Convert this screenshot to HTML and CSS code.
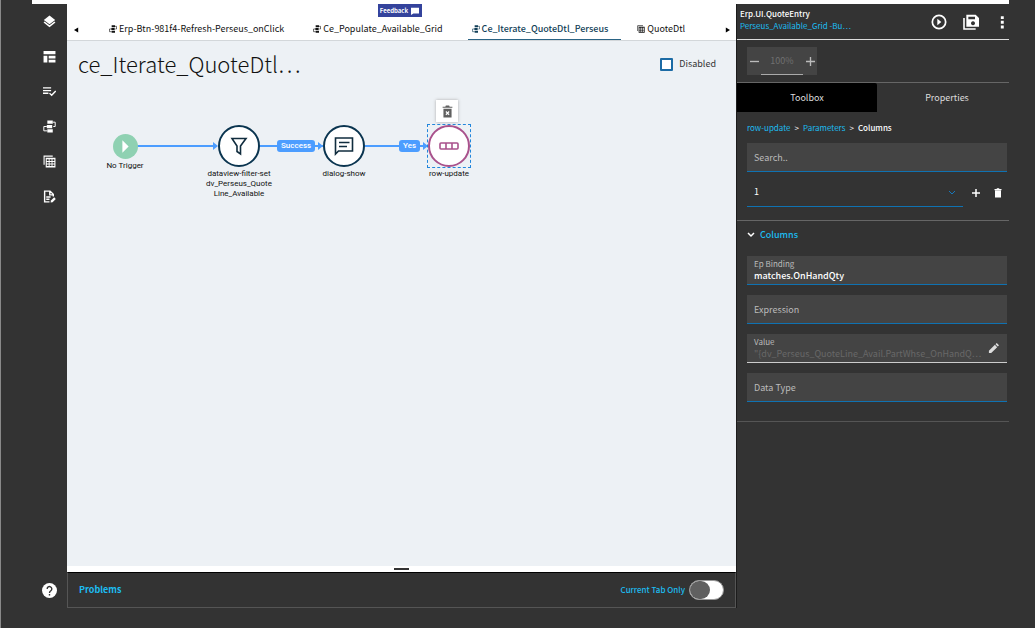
FILE: index.html
```html
<!DOCTYPE html>
<html lang="en">
<head>
    <meta charset="UTF-8">
    <meta name="viewport" content="width=device-width, initial-scale=1.0">
    <title>Application Studio</title>
    <link rel="stylesheet" href="styles.css">
</head>
<body>
    <!-- shared icons -->
    <svg class="sprite" aria-hidden="true">
        <symbol id="icon-event" viewBox="0 0 24 24">
            <path d="M8 1h10v6H8zM7 9h10v6H7zM8 17h10v6H8z" fill="currentColor"/>
            <path d="M18 4h4.500v8H19M7 12H1.500v8H8" fill="none" stroke="currentColor" stroke-width="1.800"/>
        </symbol>
        <symbol id="icon-grid" viewBox="0 0 24 24">
            <path d="M2 18V2h16" fill="none" stroke="currentColor" stroke-width="2"/>
            <path fill-rule="evenodd" fill="currentColor" d="M5 5h18v18H5zM7 8v3h3.500V8zM12.200 8v3h3.600V8zM17.500 8v3H21V8zM7 12.700v3h3.500v-3zM12.200 12.700v3h3.600v-3zM17.500 12.700v3H21v-3zM7 17.500v3h3.500v-3zM12.200 17.500v3h3.600v-3zM17.500 17.500v3H21v-3z"/>
        </symbol>
    </svg>

    <div class="app">
        <nav class="sidebar">
            <button type="button" class="side-btn" aria-label="Layers">
                <svg viewBox="0 0 24 24"><path fill="currentColor" d="M12 19 3 12.200 1 13.800 12 22.500l11-8.700-2-1.600zM12 17l10.500-8L12 1 1.500 9z"/></svg>
            </button>
            <button type="button" class="side-btn" aria-label="Layout">
                <svg viewBox="0 0 24 24"><path fill="currentColor" d="M1 2h22v6H1zM1 10.500h7V23H1zM10.500 10.500H23v5H10.500zM10.500 18H23v5H10.500z"/></svg>
            </button>
            <button type="button" class="side-btn" aria-label="Rules">
                <svg viewBox="0 0 24 24"><path fill="currentColor" d="M0 4h15v2.600H0zM0 9h15v2.600H0zM0 14h10v2.600H0z"/><path d="m12 15 4 4 7.500-8" fill="none" stroke="currentColor" stroke-width="2.600"/></svg>
            </button>
            <button type="button" class="side-btn" aria-label="Events">
                <svg><use href="#icon-event"/></svg>
            </button>
            <button type="button" class="side-btn" aria-label="Data views">
                <svg><use href="#icon-grid"/></svg>
            </button>
            <button type="button" class="side-btn" aria-label="Scripts">
                <svg viewBox="0 0 24 24"><path d="M12 22H3V2h10l6 6v4M12.500 3v6H19M6 13h8M6 17h6" fill="none" stroke="currentColor" stroke-width="2.600"/><path d="m14 23 .6-3.500 6-6 3 3-6 6z" fill="currentColor"/></svg>
            </button>
            <button type="button" class="side-btn side-help" aria-label="Help">
                <svg viewBox="0 0 24 24"><circle cx="12" cy="12" r="12" fill="currentColor"/><path d="M8.300 9.500a3.700 3.700 0 1 1 6 2.800c-1.500 1.200-2.300 1.700-2.300 3.700M12 17.600V20" fill="none" stroke="#333" stroke-width="2.200"/></svg>
            </button>
        </nav>

        <main class="main">
            <div class="tabs">
                <button type="button" class="tab-scroll" aria-label="Previous tabs"><svg viewBox="0 0 6 6"><path d="M5 0v6L0 3z"/></svg></button>
                <div class="tab-list">
                    <button type="button" class="tab"><svg><use href="#icon-event"/></svg>Erp-Btn-981f4-Refresh-Perseus_onClick</button>
                    <button type="button" class="tab"><svg><use href="#icon-event"/></svg>Ce_Populate_Available_Grid</button>
                    <button type="button" class="tab active"><svg><use href="#icon-event"/></svg>Ce_Iterate_QuoteDtl_Perseus</button>
                    <button type="button" class="tab"><svg><use href="#icon-grid"/></svg>QuoteDtl</button>
                </div>
                <button type="button" class="tab-scroll" aria-label="Next tabs"><svg viewBox="0 0 6 6"><path d="M1 0v6l5-3z"/></svg></button>
            </div>

            <section class="workspace">
                <header class="workspace-head">
                    <h1>ce_Iterate_QuoteDtl…</h1>
                    <label class="disabled-check"><input type="checkbox" id="disabled">Disabled</label>
                </header>

                <div class="diagram">
                    <svg class="links" aria-hidden="true">
                        <path d="M70 55h80M192 55h64M298 55h62" fill="none" stroke="#4c9dff" stroke-width="2"/>
                        <path d="M146 51l5 4-5 4zM251 51l5 4-5 4zM356 51l5 4-5 4z" fill="#4c9dff"/>
                    </svg>
                    <div class="node node-start">
                        <svg viewBox="0 0 24 24"><circle cx="12" cy="12" r="12" fill="#8fd1b2"/><path d="M9 6v12l6-6z" fill="#fff"/></svg>
                        <span>No Trigger</span>
                    </div>
                    <div class="node node-filter">
                        <svg viewBox="0 0 42 42"><circle cx="21" cy="21" r="20" fill="#fff" stroke="#0b3550" stroke-width="2"/><path d="M14 13.500h14l-5.500 7.500v8l-3.500-2.500V21z" fill="none" stroke="#102c3e" stroke-width="1.600"/></svg>
                        <span>dataview-filter-set<br>dv_Perseus_Quote<br>Line_Available</span>
                    </div>
                    <div class="node node-dialog">
                        <svg viewBox="0 0 42 42"><circle cx="21" cy="21" r="20" fill="#fff" stroke="#0b3550" stroke-width="2"/><path d="M12.500 29V13h17v13h-14zM16 17.500h10.500M16 21.500h8" fill="none" stroke="#102c3e" stroke-width="1.600"/></svg>
                        <span>dialog-show</span>
                    </div>
                    <div class="node node-row selected">
                        <svg viewBox="0 0 42 42"><circle cx="21" cy="21" r="20" fill="#fff" stroke="#a9528c" stroke-width="2"/><rect x="12" y="18" width="18" height="6" rx="1" fill="none" stroke="#a9528c" stroke-width="1.600"/><path d="M18 18v6M24 18v6" stroke="#a9528c" stroke-width="1.600"/></svg>
                        <span>row-update</span>
                    </div>
                    <span class="link-label label-success">Success</span>
                    <span class="link-label label-yes">Yes</span>
                    <button type="button" class="node-delete" aria-label="Delete node">
                        <svg viewBox="0 0 24 24"><path fill="#606060" d="M3 3h5l1-2h6l1 2h5v2H3zM4.500 7h15v16h-15z"/><path d="m9 12 6 6m0-6-6 6" stroke="#fff" stroke-width="2"/></svg>
                    </button>
                </div>
            </section>

            <div class="splitter"><span></span></div>

            <footer class="problems">
                <h2>Problems</h2>
                <label class="toggle">Current Tab Only<input type="checkbox" id="current-tab"></label>
            </footer>
        </main>

        <aside class="panel">
            <header class="panel-head">
                <div class="panel-title">
                    <strong>Erp.UI.QuoteEntry</strong>
                    <a href="#">Perseus_Available_Grid -Bu…</a>
                </div>
                <button type="button" class="icon-btn" aria-label="Run">
                    <svg viewBox="0 0 24 24"><circle cx="12" cy="12" r="10" fill="none" stroke="currentColor" stroke-width="2.600"/><path d="M9.500 7v10l6-5z" fill="currentColor"/></svg>
                </button>
                <button type="button" class="icon-btn" aria-label="Save all">
                    <svg viewBox="0 0 24 24"><path d="M1.500 6v16.500H19" fill="none" stroke="currentColor" stroke-width="2.400"/><path fill="currentColor" fill-rule="evenodd" d="M5 1h14l5 5v13H5zM8 4v4h10V4zM15 11a3 3 0 1 0 .01 0z"/></svg>
                </button>
                <button type="button" class="icon-btn" aria-label="More">
                    <svg viewBox="0 0 24 24"><path fill="currentColor" d="M10 2h5v5h-5zM10 10h5v5h-5zM10 18h5v5h-5z"/></svg>
                </button>
            </header>

            <div class="zoom-bar">
                <div class="zoom">
                    <button type="button" aria-label="Zoom out"><svg viewBox="0 0 10 10"><path d="M0 5h10" stroke="currentColor" stroke-width="1.500"/></svg></button>
                    <input type="text" value="100%" aria-label="Zoom" disabled>
                    <button type="button" aria-label="Zoom in"><svg viewBox="0 0 10 10"><path d="M0 5h10M5 0v10" stroke="currentColor" stroke-width="1.500"/></svg></button>
                </div>
            </div>

            <div class="panel-tabs">
                <button type="button" class="active">Toolbox</button>
                <button type="button">Properties</button>
            </div>

            <div class="panel-body">
                <nav class="crumbs"><a href="#">row-update</a><span>&gt;</span><a href="#">Parameters</a><span>&gt;</span><b>Columns</b></nav>
                <input class="field search" type="text" placeholder="Search.." aria-label="Search">
                <div class="picker">
                    <div class="select-wrap">
                        <select aria-label="Column number"><option>1</option></select>
                        <svg viewBox="0 0 8 6"><path d="m1 1 3 3 3-3" fill="none" stroke="currentColor"/></svg>
                    </div>
                    <button type="button" aria-label="Add"><svg viewBox="0 0 10 10"><path d="M1 5h8M5 1v8" stroke="currentColor" stroke-width="1.500"/></svg></button>
                    <button type="button" aria-label="Remove"><svg viewBox="0 0 10 10"><path d="M1.500 1h2l.5-.7h2l.5.700h2V2.200h-7zM2 2.500h6V9.500H2z" fill="currentColor"/></svg></button>
                </div>
            </div>

            <section class="columns">
                <h3><svg viewBox="0 0 8 6"><path d="m1 1 3 3 3-3" fill="none" stroke="currentColor" stroke-width="1.500"/></svg>Columns</h3>
                <div class="field filled">
                    <label for="binding">Ep Binding</label>
                    <input type="text" id="binding" value="matches.OnHandQty">
                </div>
                <input class="field" type="text" placeholder="Expression" aria-label="Expression">
                <div class="field filled readonly">
                    <label for="value">Value</label>
                    <input type="text" id="value" value="&quot;{dv_Perseus_QuoteLine_Avail.PartWhse_OnHandQ…" disabled>
                    <button type="button" aria-label="Edit value"><svg viewBox="0 0 12 12"><path fill="currentColor" d="M1 11V8.500L7.500 2 10 4.500 3.500 11zM8.200 1.300 9.500 0 12 2.500l-1.300 1.300z"/></svg></button>
                </div>
                <input class="field" type="text" placeholder="Data Type" aria-label="Data Type">
            </section>
        </aside>
    </div>

    <button type="button" class="feedback">Feedback<svg viewBox="0 0 10 10"><path fill="#fff" d="M0 1h10v7H3L0 10z"/></svg></button>
</body>
</html>
```
FILE: styles.css
```css
* {
    box-sizing: border-box;
}
body {
    margin: 0;
    padding: 0 26px 20px 31px;
    min-height: 100vh;
    display: flex;
    background-color: #333;
    border-left: 1px solid #8a8a8a;
    font-family: "Noto Sans CJK SC", "Noto Sans", sans-serif;
    font-size: 9px;
    line-height: 12px;
    color: #fff;
}
button, input, select {
    font: inherit;
    color: inherit;
    margin: 0;
    padding: 0;
    border: none;
    border-radius: 0;
    background: none;
}
button {
    cursor: pointer;
}
svg {
    display: block;
    flex: none;
}
a {
    color: #1cbdf2;
    text-decoration: none;
}
h1, h2, h3 {
    margin: 0;
}
.sprite {
    position: absolute;
    width: 0;
    height: 0;
}
.app {
    flex: 1;
    display: grid;
    grid-template-columns: 35px minmax(0, 1fr) 273px;
    border-top: 4px solid #fff;
}

/* left bar */
.sidebar {
    display: flex;
    flex-direction: column;
}
.side-btn {
    height: 35px;
    display: flex;
    align-items: center;
    justify-content: center;
}
.side-btn svg {
    width: 13px;
    height: 13px;
}
.side-help {
    margin-top: auto;
}
.side-help svg {
    width: 15px;
    height: 15px;
}

/* center */
.main {
    display: flex;
    flex-direction: column;
    background-color: #fff;
    color: #111;
}
.tabs {
    height: 37px;
    display: flex;
    border-bottom: 1px solid #d3d7da;
}
.tab-scroll {
    width: 18px;
    padding-top: 15px;
    display: flex;
    align-items: center;
    justify-content: center;
}
.tab-scroll svg {
    width: 5px;
    height: 6px;
}
.tab-list {
    flex: 1;
    display: flex;
    gap: 12px;
    padding-left: 20px;
}
.tab {
    display: flex;
    align-items: center;
    gap: 2px;
    padding: 14px 13px 0 4px;
    white-space: nowrap;
    border-bottom: 1px solid transparent;
}
.tab:last-child {
    padding-right: 0;
}
.tab svg {
    width: 8px;
    height: 8px;
}
.tab.active {
    color: #123f58;
    font-weight: 500;
    border-color: #2a6384;
}
.workspace {
    flex: 1;
    background-color: #edf1f5;
}
.workspace-head {
    height: 50px;
    padding: 0 20px 4px 11px;
    display: flex;
    align-items: center;
    justify-content: space-between;
}
h1 {
    padding-bottom: 2px;
    font-size: 22px;
    line-height: 32px;
    font-weight: 300;
}
.disabled-check {
    display: flex;
    align-items: center;
    gap: 6px;
    color: #333;
}
.disabled-check input {
    appearance: none;
    width: 13px;
    height: 13px;
    border: 2px solid #1c6ba5;
    border-radius: 1px;
    background-color: #fff;
}

/* nodes are placed freely on the diagram */
.diagram {
    position: relative;
    height: 160px;
}
.links {
    position: absolute;
    left: 0;
    top: 0;
    width: 100%;
    height: 100%;
}
.node {
    position: absolute;
    width: 90px;
    display: flex;
    flex-direction: column;
    align-items: center;
    font-family: Roboto, sans-serif;
    font-size: 8px;
    line-height: 10px;
    text-align: center;
}
.node svg {
    width: 42px;
    height: 42px;
    margin-bottom: 2px;
}
.node-start {
    left: 13px;
    top: 43px;
}
.node-start svg {
    width: 25px;
    height: 25px;
}
.node-filter {
    left: 127px;
    top: 34px;
}
.node-dialog {
    left: 232px;
    top: 34px;
}
.node-row {
    left: 337px;
    top: 34px;
}
.selected svg {
    outline: 1px dashed #2286dc;
}
.link-label {
    position: absolute;
    top: 49px;
    padding: 0 4px;
    border-radius: 3px;
    background-color: #4c9dff;
    color: #fff;
    font-family: Roboto, sans-serif;
    font-size: 8px;
    font-weight: 500;
}
.label-success {
    left: 210px;
}
.label-yes {
    left: 332px;
}
.node-delete {
    position: absolute;
    left: 369px;
    top: 9px;
    width: 22px;
    height: 22px;
    display: flex;
    align-items: center;
    justify-content: center;
    background-color: #fff;
    box-shadow: 0 0 3px #aaa;
}
.node-delete svg {
    width: 13px;
    height: 13px;
}
.splitter {
    height: 6px;
    display: flex;
    align-items: center;
    justify-content: center;
}
.splitter span {
    width: 15px;
    height: 2px;
    background-color: #333;
}
.problems {
    height: 36px;
    padding: 0 11px;
    display: flex;
    align-items: center;
    justify-content: space-between;
    background-color: #333;
    border: 1px solid #555;
    border-top-color: #000;
    color: #1cbdf2;
}
.problems h2 {
    font-size: 9px;
    font-weight: 700;
}
.toggle {
    display: flex;
    align-items: center;
    gap: 4px;
    font-size: 8px;
    font-weight: 500;
}
.toggle input {
    appearance: none;
    width: 35px;
    height: 20px;
    border: 1px solid #999;
    border-radius: 10px;
    background-color: #fff;
}
.toggle input::before {
    content: "";
    display: block;
    width: 20px;
    height: 18px;
    border-radius: 9px;
    background-color: #606060;
}

/* right panel */
.panel {
    border-left: 1px solid #1c1c1c;
}
.panel-head {
    height: 36px;
    padding-left: 3px;
    display: flex;
    align-items: center;
    border-bottom: 1px solid #ddd;
}
.panel-title {
    flex: 1;
    padding-bottom: 3px;
    font-size: 8px;
    white-space: nowrap;
}
.panel-title strong, .panel-title a {
    display: block;
}
.panel-title strong {
    font-weight: 500;
}
.icon-btn {
    width: 32px;
    display: flex;
    justify-content: center;
}
.icon-btn svg {
    width: 16px;
    height: 16px;
}
.icon-btn:last-child {
    width: 14px;
    margin-left: 8px;
}
.icon-btn:last-child svg {
    width: 14px;
    height: 14px;
}
.zoom-bar {
    height: 43px;
    padding: 7px 10px;
    border-bottom: 1px solid #666;
}
.zoom {
    width: 70px;
    height: 28px;
    display: flex;
    background-color: #444;
    color: #bbb;
}
.zoom button {
    width: 14px;
    display: flex;
    align-items: center;
    justify-content: center;
}
.zoom svg {
    width: 9px;
    height: 9px;
}
.zoom input {
    width: 42px;
    text-align: center;
    color: #707070;
    border-bottom: 1px solid #aaa;
}
.panel-tabs {
    display: flex;
}
.panel-tabs button {
    flex: 1;
    height: 29px;
    padding-left: 8px;
    color: #ddd;
}
.panel-tabs .active {
    flex: 0 0 140px;
    padding-left: 0;
    background-color: #000;
    border-radius: 0 2px 0 0;
}
.panel-body {
    padding: 10px 2px 13px 10px;
    border-bottom: 1px solid #666;
}
.crumbs {
    display: flex;
    gap: 4px;
    margin-bottom: 9px;
    font-size: 8px;
}
.crumbs b {
    font-weight: 500;
}
.field {
    display: block;
    width: 100%;
    height: 29px;
    padding: 0 7px;
    background-color: #444;
    border-bottom: 1px solid #0f72b2;
}
.field::placeholder {
    color: #bbb;
    opacity: 1;
}
.picker {
    display: flex;
    height: 35px;
    margin-right: -2px;
    padding-top: 6px;
}
.select-wrap {
    flex: 1;
    position: relative;
    margin-right: 2px;
    border-bottom: 1px solid #0f72b2;
}
.select-wrap select {
    appearance: none;
    width: 100%;
    height: 100%;
    padding: 0 7px;
}
.select-wrap svg {
    position: absolute;
    right: 7px;
    top: 12px;
    width: 8px;
    height: 6px;
    color: #1678bd;
}
.picker button {
    width: 22px;
    display: flex;
    align-items: center;
    justify-content: center;
}
.picker button svg {
    width: 10px;
    height: 10px;
}
.columns {
    display: flex;
    flex-direction: column;
    gap: 10px;
    padding: 8px 2px 19px 10px;
    border-bottom: 1px solid #555;
}
.columns h3 {
    display: flex;
    align-items: center;
    gap: 5px;
    margin-bottom: 5px;
    font-size: 9px;
    line-height: 12px;
    font-weight: 500;
    color: #1cbdf2;
}
.columns h3 svg {
    width: 8px;
    height: 6px;
    color: #fff;
}
.filled {
    position: relative;
    padding: 2px 7px;
}
.filled label {
    display: block;
    font-size: 8px;
    color: #bbb;
}
.filled input {
    display: block;
    width: 100%;
    height: 12px;
    font-weight: 500;
}
.readonly {
    border-color: #ccc;
}
.readonly input {
    font-weight: 400;
    color: #686868;
}
.readonly button {
    position: absolute;
    right: 8px;
    top: 9px;
    color: #ddd;
}
.readonly button svg {
    width: 11px;
    height: 11px;
}

.feedback {
    position: absolute;
    left: 50%;
    top: 4px;
    width: 44px;
    height: 13px;
    margin-left: -140px;
    display: flex;
    align-items: center;
    justify-content: center;
    gap: 3px;
    background-color: #34439c;
    font-size: 6px;
    font-weight: 700;
}
.feedback svg {
    width: 8px;
    height: 8px;
}
```
